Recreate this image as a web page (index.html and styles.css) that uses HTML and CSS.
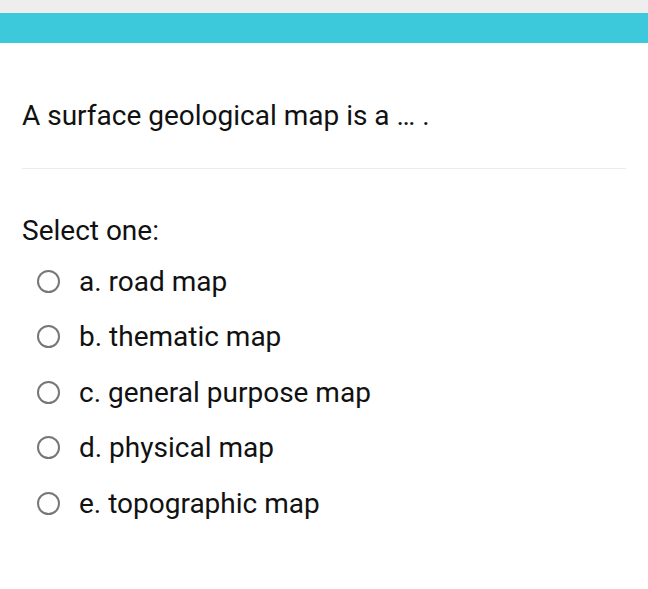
FILE: index.html
```html
<!DOCTYPE html>
<html>
<head>
<meta charset="utf-8">
<link rel="stylesheet" href="styles.css">
</head>
<body>
<div class="topbar"></div>
<div class="accent"></div>
<main class="content">
  <p class="question">A surface geological map is a … .</p>
  <hr class="divider">
  <p class="prompt">Select one:</p>
  <ul class="options">
    <li class="option"><span class="radio"></span><span class="label">a. road map</span></li>
    <li class="option"><span class="radio"></span><span class="label">b. thematic map</span></li>
    <li class="option"><span class="radio"></span><span class="label">c. general purpose map</span></li>
    <li class="option"><span class="radio"></span><span class="label">d. physical map</span></li>
    <li class="option"><span class="radio"></span><span class="label">e. topographic map</span></li>
  </ul>
</main>
</body>
</html>
```

FILE: styles.css
```css
* { box-sizing: border-box; }
html, body {
  margin: 0;
  padding: 0;
  background: #ffffff;
  font-family: Roboto, "Liberation Sans", sans-serif;
  color: #111111;
}
.topbar {
  height: 13px;
  background: #eeeeee;
}
.accent {
  height: 30px;
  background: #3bc9db;
}
.content {
  padding: 0 22px;
}
.question {
  margin: 0;
  padding-top: 56px;
  font-size: 28px;
  line-height: 34px;
}
.divider {
  border: 0;
  border-top: 1px solid #ececec;
  margin: 35px 0 0 0;
}
.prompt {
  margin: 0;
  padding-top: 45px;
  font-size: 28px;
  line-height: 34px;
}
.options {
  list-style: none;
  margin: 0;
  padding: 0 0 0 15px;
  display: flex;
  flex-direction: column;
  gap: 21.5px;
  margin-top: 16px;
}
.option {
  display: flex;
  align-items: center;
  gap: 19px;
  height: 34px;
  font-size: 28px;
}
.radio {
  width: 23px;
  height: 23px;
  border: 2px solid #777777;
  border-radius: 50%;
  flex: none;
}
```
